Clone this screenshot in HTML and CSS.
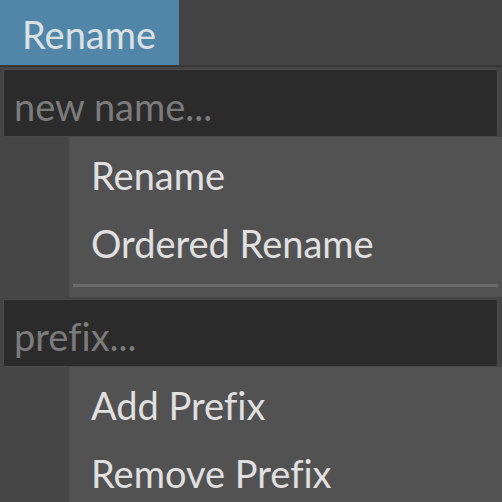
FILE: index.html
```html
<!DOCTYPE html>
<html>
<head>
<meta charset="utf-8">
<link rel="stylesheet" href="styles.css">
</head>
<body>
<div class="tab">Rename</div>
<div class="menu">
  <div class="field-row"><input class="field" placeholder="new name..."></div>
  <div class="item"><span class="gutter"></span><span class="label">Rename</span></div>
  <div class="item"><span class="gutter"></span><span class="label">Ordered Rename</span></div>
  <div class="sep-row"><span class="gutter"></span><span class="sep-cell"><span class="sep"></span></span></div>
  <div class="field-row"><input class="field" placeholder="prefix..."></div>
  <div class="item"><span class="gutter"></span><span class="label">Add Prefix</span></div>
  <div class="item"><span class="gutter"></span><span class="label">Remove Prefix</span></div>
</div>
</body>
</html>
```
FILE: styles.css
```css
html, body {
  margin: 0;
  padding: 0;
  background: #444444;
  font-family: Lato, "Liberation Sans", sans-serif;
  font-variant-ligatures: none;
  overflow: hidden;
}
.tab {
  width: 179px;
  height: 65px;
  box-sizing: border-box;
  padding: 2px 0 0 22px;
  display: flex;
  align-items: center;
  background: #5186a8;
  color: #dbe0e4;
  font-size: 38px;
}
.menu {
  border-top: 2px solid #363636;
  background: #525252;
}
.field-row {
  background: #444444;
  padding: 2px 4px 0 3px;
}
.field {
  display: block;
  width: 100%;
  height: 68px;
  box-sizing: border-box;
  margin: 0;
  padding: 5px 0 0 10px;
  border: 1px solid #4a4a4a;
  border-radius: 2px;
  background: #2b2b2b;
  color: #dddddd;
  font-family: Lato, "Liberation Sans", sans-serif;
  font-variant-ligatures: none;
  font-size: 38px;
  outline: none;
}
.field::placeholder {
  color: #7c7c7c;
}
.item, .sep-row {
  display: flex;
}
.gutter {
  width: 69px;
  flex: none;
  background: #464646;
}
.label {
  flex: 1;
  height: 68px;
  box-sizing: border-box;
  padding: 7px 0 0 22px;
  display: flex;
  align-items: center;
  color: #e0e0e0;
  font-size: 38px;
  white-space: nowrap;
}
.sep-cell {
  flex: 1;
  padding: 11px 4px 10px 4px;
}
.sep {
  display: block;
  height: 3px;
  background: #6a6a6a;
}
```
